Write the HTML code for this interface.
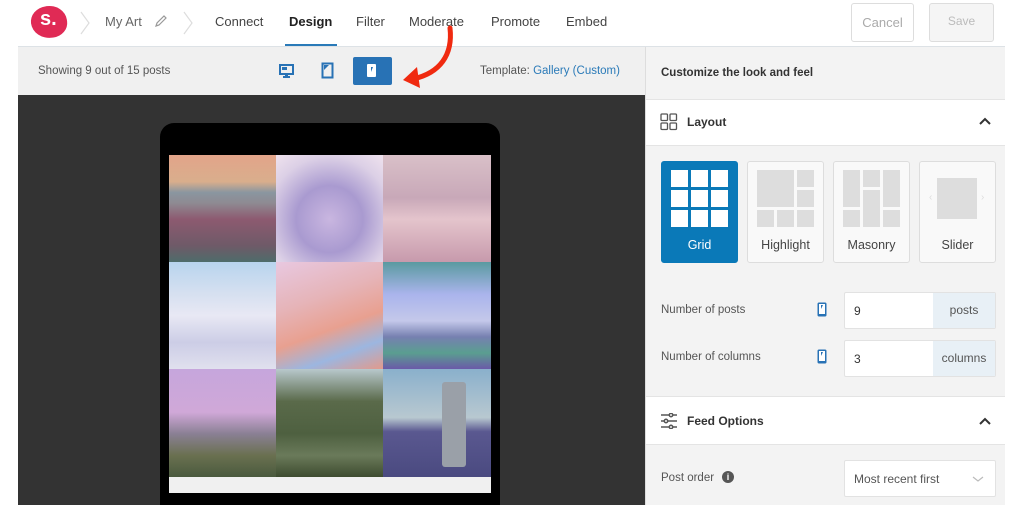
<!DOCTYPE html>
<html style="width:1024px;height:505px;overflow:hidden"><head><meta charset="utf-8"><style>
*{box-sizing:border-box;margin:0;padding:0}
body{width:1024px;height:505px;overflow:hidden;background:#fff;font-family:"Liberation Sans",sans-serif;position:relative;color:#333}
.a{position:absolute}
.nav{font-size:13px;color:#444;top:14px}
.cell{position:absolute;width:107px;height:107px}
.lbl{font-size:11.5px;color:#555}
.btn{position:absolute;border:1px solid #ddd;border-radius:3px;background:#f9f9f9;text-align:center;font-size:12px;color:#444}
</style></head><body>
<!-- header -->
<div class="a" style="left:31px;top:6px;width:36px;height:32px;background:#e02a55;border-radius:48% 52% 45% 55%;transform:rotate(-8deg)"></div>
<div class="a" style="left:40px;top:8px;color:#fff;font-weight:bold;font-size:20px">s.</div>
<svg class="a" style="left:78px;top:10px" width="14" height="26"><path d="M3 2 L11 13 L3 24" stroke="#ddd" fill="none" stroke-width="1.2"/></svg>
<div class="a nav" style="left:105px;color:#666">My Art</div>
<svg class="a" style="left:154px;top:14px" width="14" height="14"><path d="M2 12 L3 9 L10 2 L12 4 L5 11 Z" stroke="#999" fill="none" stroke-width="1.2"/></svg>
<svg class="a" style="left:181px;top:10px" width="14" height="26"><path d="M3 2 L11 13 L3 24" stroke="#ddd" fill="none" stroke-width="1.2"/></svg>
<div class="a nav" style="left:215px">Connect</div>
<div class="a nav" style="left:289px;font-weight:bold;color:#222">Design</div>
<div class="a" style="left:285px;top:44px;width:52px;height:2px;background:#2a7ab8"></div>
<div class="a nav" style="left:356px">Filter</div>
<div class="a nav" style="left:409px">Moderate</div>
<div class="a nav" style="left:491px">Promote</div>
<div class="a nav" style="left:566px">Embed</div>
<div class="btn" style="left:851px;top:3px;width:63px;height:39px;background:#fff;line-height:37px;color:#aaa;font-size:13px">Cancel</div>
<div class="btn" style="left:929px;top:3px;width:65px;height:39px;background:#f5f5f5;line-height:35px;color:#bbb;font-size:12px">Save</div>
<div class="a" style="left:18px;top:46px;width:987px;height:1px;background:#dde2e6"></div>
<!-- toolbar -->
<div class="a" style="left:18px;top:47px;width:627px;height:48px;background:#f0f0f0"></div>
<div class="a" style="left:38px;top:65px;font-size:11.5px;color:#555">Showing 9 out of 15 posts</div>
<svg class="a" style="left:279px;top:63px" width="16" height="16"><rect x="1" y="2" width="13" height="9" fill="none" stroke="#2872b5" stroke-width="2"/><rect x="3" y="4" width="5" height="3" fill="#2872b5"/><rect x="6" y="11" width="3" height="3" fill="#2872b5"/><rect x="4" y="13" width="7" height="2" fill="#2872b5"/></svg>
<svg class="a" style="left:321px;top:62px" width="14" height="18"><rect x="1.5" y="1.5" width="10" height="14" fill="none" stroke="#2872b5" stroke-width="2"/><path d="M3 3 L8 3 L3 8Z" fill="#2872b5"/></svg>
<div class="a" style="left:353px;top:57px;width:39px;height:28px;background:#2872b5;border-radius:2px"></div>
<svg class="a" style="left:366px;top:63px" width="12" height="16"><rect x="1" y="1" width="9" height="13" fill="#fff" rx="1"/><path d="M5 4 L7 4 L5 9Z" fill="#2872b5"/></svg>
<svg class="a" style="left:395px;top:25px" width="70" height="65"><path d="M55 3 C58 30 45 48 18 54" stroke="#f02a10" stroke-width="5" fill="none" stroke-linecap="round"/><path d="M8 55 L22 42 L25 63 Z" fill="#f02a10"/></svg>
<div class="a" style="left:480px;top:65px;font-size:11.5px;color:#555">Template: <span style="color:#2a7ab8">Gallery (Custom)</span></div>
<!-- preview -->
<div class="a" style="left:18px;top:95px;width:627px;height:410px;background:#333;overflow:hidden">
<div class="a" style="left:142px;top:28px;width:340px;height:400px;background:#000;border-radius:14px"></div>
</div>
<div class="a" style="left:169px;top:477px;width:322px;height:16px;background:#f0f0f0"></div>
<div class="cell" style="left:169px;top:155px;background:linear-gradient(180deg,#e2a48a 0%,#d9ae8c 25%,#8a96a0 35%,#8e8a92 45%,#8d5a70 60%,#6e5a68 85%,#4e6c6a 100%)"></div>
<div class="cell" style="left:276px;top:155px;background:radial-gradient(circle at 50% 60%,#c9b6e0 0%,#a99ad0 40%,#dcd0e6 75%,#efe2ee 100%)"></div>
<div class="cell" style="left:383px;top:155px;width:108px;background:linear-gradient(180deg,#d9c0c8 0%,#c8a8b8 40%,#e4c4cc 60%,#c79aac 100%)"></div>
<div class="cell" style="left:169px;top:262px;background:linear-gradient(180deg,#b8d4ee 0%,#d6e0f0 30%,#e8e8f4 50%,#cccde6 75%,#e0e0ee 100%)"></div>
<div class="cell" style="left:276px;top:262px;background:linear-gradient(160deg,#e8c8e0 0%,#e6b4b8 35%,#e8a090 60%,#9cb6e0 80%,#e29a8c 100%)"></div>
<div class="cell" style="left:383px;top:262px;width:108px;background:linear-gradient(180deg,#5a9aa0 0%,#aab4ec 30%,#c4c8ea 55%,#7680b0 70%,#5a9e90 85%,#6a5aa8 100%)"></div>
<div class="cell" style="left:169px;top:369px;height:108px;background:linear-gradient(180deg,#c6a6dc 0%,#d0a8d8 40%,#8a8094 60%,#6a7050 80%,#4a5a3e 100%)"></div>
<div class="cell" style="left:276px;top:369px;height:108px;background:linear-gradient(180deg,#b8c8cc 0%,#5a6a4a 30%,#4e6040 60%,#6a7a5a 80%,#3e4c30 100%)"></div>
<div class="cell" style="left:383px;top:369px;width:108px;height:108px;background:linear-gradient(180deg,#8ab0cc 0%,#b8c8d0 45%,#5a5890 58%,#4a4a80 100%)"></div>
<div class="a" style="left:442px;top:382px;width:24px;height:85px;background:#9aa0a8;border-radius:3px"></div>
<!-- right panel -->
<div class="a" style="left:645px;top:47px;width:360px;height:458px;background:#f3f3f3;border-left:1px solid #ddd"></div>
<div class="a" style="left:661px;top:67px;font-size:11.5px;font-weight:bold;color:#333">Customize the look and feel</div>
<div class="a" style="left:646px;top:99px;width:359px;height:47px;background:#fff;border-top:1px solid #e4e4e4;border-bottom:1px solid #e4e4e4"></div>
<svg class="a" style="left:660px;top:113px" width="18" height="18"><g fill="none" stroke="#555" stroke-width="1.3"><rect x="1" y="1" width="6.5" height="6.5" rx="1"/><rect x="10" y="1" width="6.5" height="6.5" rx="1"/><rect x="1" y="10" width="6.5" height="6.5" rx="1"/><rect x="10" y="10" width="6.5" height="6.5" rx="1"/></g></svg>
<div class="a" style="left:687px;top:115px;font-size:12px;font-weight:bold;color:#333">Layout</div>
<svg class="a" style="left:978px;top:116px" width="14" height="10"><path d="M2 8 L7 3 L12 8" stroke="#333" stroke-width="2" fill="none"/></svg>
<!-- layout options -->
<div class="btn" style="left:661px;top:161px;width:77px;height:102px;background:#0a79b8;border-color:#0a79b8"></div>
<svg class="a" style="left:671px;top:170px" width="57" height="57"><g fill="#fff"><rect x="0" y="0" width="17" height="17"/><rect x="20" y="0" width="17" height="17"/><rect x="40" y="0" width="17" height="17"/><rect x="0" y="20" width="17" height="17"/><rect x="20" y="20" width="17" height="17"/><rect x="40" y="20" width="17" height="17"/><rect x="0" y="40" width="17" height="17"/><rect x="20" y="40" width="17" height="17"/><rect x="40" y="40" width="17" height="17"/></g></svg>
<div class="a" style="left:661px;top:238px;width:77px;text-align:center;color:#fff;font-size:12.5px">Grid</div>
<div class="btn" style="left:747px;top:161px;width:77px;height:102px"></div>
<svg class="a" style="left:757px;top:170px" width="57" height="57"><g fill="#ddd"><rect x="0" y="0" width="37" height="37"/><rect x="40" y="0" width="17" height="17"/><rect x="40" y="20" width="17" height="17"/><rect x="0" y="40" width="17" height="17"/><rect x="20" y="40" width="17" height="17"/><rect x="40" y="40" width="17" height="17"/></g></svg>
<div class="a" style="left:747px;top:238px;width:77px;text-align:center;color:#444;font-size:12.5px">Highlight</div>
<div class="btn" style="left:833px;top:161px;width:77px;height:102px"></div>
<svg class="a" style="left:843px;top:170px" width="57" height="57"><g fill="#ddd"><rect x="0" y="0" width="17" height="37"/><rect x="20" y="0" width="17" height="17"/><rect x="40" y="0" width="17" height="37"/><rect x="0" y="40" width="17" height="17"/><rect x="20" y="20" width="17" height="37"/><rect x="40" y="40" width="17" height="17"/></g></svg>
<div class="a" style="left:833px;top:238px;width:77px;text-align:center;color:#444;font-size:12.5px">Masonry</div>
<div class="btn" style="left:919px;top:161px;width:77px;height:102px"></div>
<div class="a" style="left:937px;top:178px;width:40px;height:41px;background:#ddd"></div>
<div class="a" style="left:929px;top:192px;color:#ddd;font-size:10px">‹</div>
<div class="a" style="left:981px;top:192px;color:#ddd;font-size:10px">›</div>
<div class="a" style="left:919px;top:238px;width:77px;text-align:center;color:#444;font-size:12.5px">Slider</div>
<!-- number fields -->
<div class="a lbl" style="left:661px;top:304px">Number of posts</div>
<svg class="a" style="left:817px;top:302px" width="10" height="16"><rect x="0.5" y="0.5" width="9" height="14" rx="1.5" fill="#2872b5"/><rect x="2" y="2" width="6" height="10" fill="#fff"/><path d="M4 3 L6 3 L4 7Z" fill="#2872b5"/></svg>
<div class="a" style="left:844px;top:292px;width:152px;height:37px;background:#fff;border:1px solid #e2e2e2;border-radius:2px"></div>
<div class="a" style="left:933px;top:293px;width:62px;height:35px;background:#e8f0f6;text-align:center;line-height:35px;font-size:12px;color:#555">posts</div>
<div class="a" style="left:854px;top:304px;font-size:12px">9</div>
<div class="a lbl" style="left:661px;top:351px">Number of columns</div>
<svg class="a" style="left:817px;top:349px" width="10" height="16"><rect x="0.5" y="0.5" width="9" height="14" rx="1.5" fill="#2872b5"/><rect x="2" y="2" width="6" height="10" fill="#fff"/><path d="M4 3 L6 3 L4 7Z" fill="#2872b5"/></svg>
<div class="a" style="left:844px;top:340px;width:152px;height:37px;background:#fff;border:1px solid #e2e2e2;border-radius:2px"></div>
<div class="a" style="left:933px;top:341px;width:62px;height:35px;background:#e8f0f6;text-align:center;line-height:35px;font-size:12px;color:#555">columns</div>
<div class="a" style="left:854px;top:352px;font-size:12px">3</div>
<!-- feed options -->
<div class="a" style="left:646px;top:396px;width:359px;height:49px;background:#fff;border-top:1px solid #e4e4e4;border-bottom:1px solid #e4e4e4"></div>
<svg class="a" style="left:660px;top:413px" width="18" height="16"><g stroke="#555" stroke-width="1.5" fill="#fff"><line x1="1" y1="2" x2="17" y2="2"/><line x1="1" y1="8" x2="17" y2="8"/><line x1="1" y1="14" x2="17" y2="14"/><circle cx="11" cy="2" r="1.7"/><circle cx="6" cy="8" r="1.7"/><circle cx="11" cy="14" r="1.7"/></g></svg>
<div class="a" style="left:687px;top:414px;font-size:12px;font-weight:bold;color:#333">Feed Options</div>
<svg class="a" style="left:978px;top:416px" width="14" height="10"><path d="M2 8 L7 3 L12 8" stroke="#333" stroke-width="2" fill="none"/></svg>
<div class="a lbl" style="left:661px;top:472px">Post order</div>
<div class="a" style="left:722px;top:471px;width:12px;height:12px;border-radius:50%;background:#555;color:#fff;font-size:9px;text-align:center;line-height:12px;font-weight:bold">i</div>
<div class="a" style="left:844px;top:460px;width:152px;height:37px;background:#fff;border:1px solid #e2e2e2;border-radius:2px"></div>
<div class="a" style="left:854px;top:472px;font-size:12px;color:#555">Most recent first</div>
<svg class="a" style="left:971px;top:474px" width="14" height="10"><path d="M2 3 L7 7 L12 3" stroke="#bbb" stroke-width="1.2" fill="none"/></svg>
</body></html>
